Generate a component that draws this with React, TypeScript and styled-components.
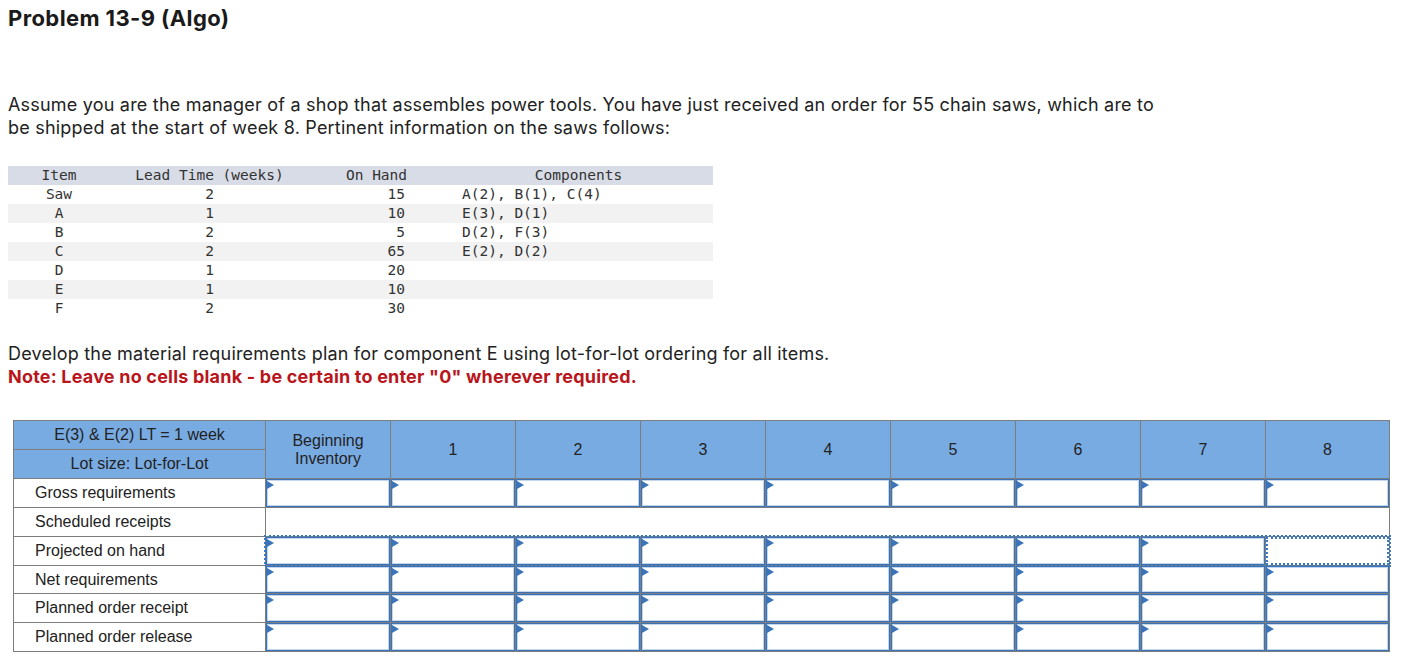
import React from "react";
import styled, { createGlobalStyle } from "styled-components";

const Global = createGlobalStyle`
  html, body { margin: 0; padding: 0; background: #fff; }
  body { font-family: Inter, Lato, sans-serif; color: #1f1f1f; }
`;

const Page = styled.div`
  padding: 4px 8px 0 8px;
  width: 1408px;
  box-sizing: border-box;
`;

const Title = styled.h1`
  margin: 0;
  font-family: Inter, Lato, sans-serif;
  font-weight: 700;
  font-size: 22px;
  letter-spacing: 0.4px;
  line-height: 28px;
  color: #1a1a1a;
`;

const Para = styled.p<{ $top: number }>`
  margin: ${(p) => p.$top}px 0 0 0;
  font-family: Inter, Lato, sans-serif;
  font-size: 18px;
  letter-spacing: 0.2px;
  line-height: 23px;
  color: #222;
`;

const Note = styled.span`
  display: block;
  color: #b9151b;
  font-weight: 700;
`;

const InfoTable = styled.div`
  margin-top: 27px;
  display: grid;
  grid-template-columns: 102px 199px 135px 269px;
  grid-auto-rows: 19px;
  font-family: "DejaVu Sans Mono", "Liberation Mono", monospace;
  font-size: 14.5px;
  line-height: 19px;
  color: #333;
`;

const InfoRow = styled.div<{ $variant: "head" | "odd" | "even" }>`
  display: contents;
  & > div {
    background: ${(p) =>
      p.$variant === "head" ? "#d8dce6" : p.$variant === "odd" ? "#f2f2f2" : "#fff"};
  }
`;

const InfoCell = styled.div<{ $align: "center" | "right" | "left"; $pad?: number }>`
  text-align: ${(p) => p.$align};
  padding-left: ${(p) => (p.$align === "left" ? p.$pad ?? 0 : 0)}px;
  padding-right: ${(p) => (p.$align === "right" ? p.$pad ?? 0 : 0)}px;
  white-space: pre;
`;

const MrpGrid = styled.div`
  margin: 32px 0 0 5px;
  display: grid;
  grid-template-columns: 251px repeat(8, 124px) 123px;
  grid-template-rows: 28px 28px 28px 28px 28px 27px 28px 28px;
  gap: 1px;
  background: #7d7d7d;
  border: 1px solid #7d7d7d;
  width: max-content;
  font-family: "Liberation Sans", Arial, sans-serif;
  font-size: 16px;
  color: #222;
`;

const HeadCell = styled.div<{ $rows?: number }>`
  background: #79abe3;
  display: flex;
  align-items: center;
  justify-content: center;
  text-align: center;
  line-height: 18px;
  grid-row: ${(p) => (p.$rows ? `span ${p.$rows}` : "auto")};
`;

const Label = styled.div`
  background: #fff;
  display: flex;
  align-items: center;
  padding-left: 21px;
`;

const Blank = styled.div`
  background: #fff;
  grid-column: span 9;
`;

const DottedRow = styled.div`
  grid-column: span 9;
  display: grid;
  grid-template-columns: repeat(8, 124px) 123px;
  gap: 1px;
  background: #7d7d7d;
  outline: 2px dotted #3b78c2;
  outline-offset: 0px;
`;

const InputCell = styled.div`
  position: relative;
  background: #fff;
  display: flex;
`;

const Field = styled.input`
  flex: 1;
  min-width: 0;
  margin: 0;
  padding: 0 6px;
  box-sizing: border-box;
  border: 1px solid #3a73b7;
  box-shadow: inset 0 0 0 1px #c2d6ee;
  background: #fff;
  font: inherit;
  outline: none;
`;

const Flag = styled.span`
  position: absolute;
  top: 2px;
  left: 1px;
  width: 0;
  height: 0;
  border-top: 4px solid transparent;
  border-bottom: 4px solid transparent;
  border-left: 7px solid #3b74b8;
  pointer-events: none;
`;

const EmptyFocus = styled.div`
  background: #fff;
  outline: 2px dotted #3b78c2;
  outline-offset: -2px;
`;

const Input = () => (
  <InputCell>
    <Field type="text" aria-label="value" />
    <Flag />
  </InputCell>
);

const infoRows = [
  ["Saw", "2", "15", "A(2), B(1), C(4)"],
  ["A", "1", "10", "E(3), D(1)"],
  ["B", "2", "5", "D(2), F(3)"],
  ["C", "2", "65", "E(2), D(2)"],
  ["D", "1", "20", ""],
  ["E", "1", "10", ""],
  ["F", "2", "30", ""],
];

const weeks = [1, 2, 3, 4, 5, 6, 7, 8];
const nine = Array.from({ length: 9 }, (_, i) => i);

export default function App() {
  return (
    <>
      <Global />
      <Page>
        <Title>Problem 13-9 (Algo)</Title>
        <Para $top={61}>
          Assume you are the manager of a shop that assembles power tools. You have just received an order for 55 chain saws, which are to
          <br />
          be shipped at the start of week 8. Pertinent information on the saws follows:
        </Para>
        <InfoTable>
          <InfoRow $variant="head">
            <InfoCell $align="center">Item</InfoCell>
            <InfoCell $align="center">Lead Time (weeks)</InfoCell>
            <InfoCell $align="center">On Hand</InfoCell>
            <InfoCell $align="center">Components</InfoCell>
          </InfoRow>
          {infoRows.map((r, i) => (
            <InfoRow key={r[0]} $variant={i % 2 === 1 ? "odd" : "even"}>
              <InfoCell $align="center">{r[0]}</InfoCell>
              <InfoCell $align="center">{r[1]}</InfoCell>
              <InfoCell $align="right" $pad={39}>{r[2]}</InfoCell>
              <InfoCell $align="left" $pad={18}>{r[3]}</InfoCell>
            </InfoRow>
          ))}
        </InfoTable>
        <Para $top={24}>
          Develop the material requirements plan for component E using lot-for-lot ordering for all items.
          <Note>Note: Leave no cells blank - be certain to enter "0" wherever required.</Note>
        </Para>
        <MrpGrid>
          <HeadCell>E(3) &amp; E(2) LT = 1 week</HeadCell>
          <HeadCell $rows={2}>
            Beginning
            <br />
            Inventory
          </HeadCell>
          {weeks.map((w) => (
            <HeadCell key={w} $rows={2}>
              {w}
            </HeadCell>
          ))}
          <HeadCell>Lot size: Lot-for-Lot</HeadCell>

          <Label>Gross requirements</Label>
          {nine.map((i) => (
            <Input key={i} />
          ))}

          <Label>Scheduled receipts</Label>
          <Blank />

          <Label>Projected on hand</Label>
          <DottedRow>
            {nine.slice(0, 8).map((i) => (
              <Input key={i} />
            ))}
            <EmptyFocus />
          </DottedRow>

          <Label>Net requirements</Label>
          {nine.map((i) => (
            <Input key={i} />
          ))}

          <Label>Planned order receipt</Label>
          {nine.map((i) => (
            <Input key={i} />
          ))}

          <Label>Planned order release</Label>
          {nine.map((i) => (
            <Input key={i} />
          ))}
        </MrpGrid>
      </Page>
    </>
  );
}
